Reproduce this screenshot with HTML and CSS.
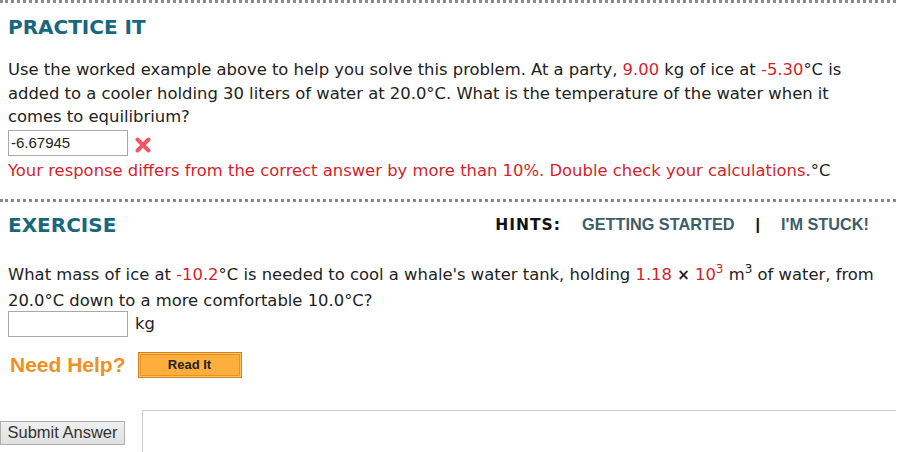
FILE: index.html
```html
<!DOCTYPE html>
<html>
<head>
<meta charset="utf-8">
<link rel="stylesheet" href="styles.css">
</head>
<body>
<div class="page">
  <section class="block">
    <h2 class="heading">PRACTICE IT</h2>
    <p class="text">Use the worked example above to help you solve this problem. At a party, <span class="red">9.00</span> kg of ice at <span class="red">-5.30</span>°C is<br>added to a cooler holding 30 liters of water at 20.0°C. What is the temperature of the water when it<br>comes to equilibrium?</p>
    <div class="answer-row">
      <input class="field" type="text" value="-6.67945">
      <svg class="wrong" width="16" height="16" viewBox="0 0 16 16"><path d="M2.5 2.5 L13.5 13.5 M13.5 2.5 L2.5 13.5" stroke="#ec5a62" stroke-width="4" stroke-linecap="round"/></svg>
    </div>
    <p class="error"><span class="red">Your response differs from the correct answer by more than 10%. Double check your calculations.</span>°C</p>
  </section>
  <section class="block">
    <div class="head-row">
      <h2 class="heading">EXERCISE</h2>
      <div class="hints">
        <span class="hints-label">HINTS:</span>
        <a class="hint-link">GETTING STARTED</a>
        <span class="sep">|</span>
        <a class="hint-link">I'M STUCK!</a>
      </div>
    </div>
    <p class="text q2">What mass of ice at <span class="red">-10.2</span>°C is needed to cool a whale's water tank, holding <span class="red">1.18</span> <b class="times">×</b> <span class="red">10<sup>3</sup></span> m<sup>3</sup> of water, from<br>20.0°C down to a more comfortable 10.0°C?</p>
    <div class="answer-row tight">
      <input class="field" type="text" value="">
      <span class="unit">kg</span>
    </div>
    <div class="help-row">
      <span class="need-help">Need Help?</span>
      <button class="read-it">Read It</button>
    </div>
  </section>
  <div class="bottom-row">
    <button class="submit">Submit Answer</button>
    <div class="panel"></div>
  </div>
</div>
</body>
</html>
```
FILE: styles.css
```css
html, body { margin: 0; padding: 0; background: #fff; }
body { font-family: "DejaVu Sans", Verdana, sans-serif; color: #222; }
.page { width: 896px; }
.block { border-top: 3px dotted #8a8a8a; padding: 0 8px 16px 8px; }
.heading { margin: 0; padding-top: 12px; font-size: 20px; font-weight: bold; color: #17687e; line-height: 24px; }
.text { margin: 19px 0 0 0; font-size: 16.4px; line-height: 23.5px; white-space: nowrap; }
.red { color: #d41f2c; }
.answer-row { display: flex; align-items: center; gap: 7px; margin-top: 1px; }
.answer-row.tight { margin-top: -2px; }
.field { box-sizing: border-box; width: 120px; height: 26px; margin: 0; border: 1px solid #a9a9a9; padding: 2px 2px; font-family: "Liberation Sans", Arial, sans-serif; font-size: 15px; color: #222; }
.wrong { margin-top: 5px; }
.error { margin: 3px 0 0 0; font-size: 16.4px; line-height: 24px; }
.head-row { display: flex; justify-content: space-between; align-items: center; padding-top: 11px; }
.head-row .heading { padding-top: 0; }
.hints { display: flex; align-items: baseline; gap: 21px; padding-right: 19px; }
.hints-label { font-family: "DejaVu Sans", Verdana, sans-serif; font-weight: bold; font-size: 15.5px; letter-spacing: 1px; color: #111; }
.hint-link { font-family: "Liberation Sans", Arial, sans-serif; font-weight: bold; font-size: 16.3px; color: #3d5d68; }
.sep { font-family: "Liberation Sans", Arial, sans-serif; font-weight: bold; font-size: 16px; color: #111; }
.q2 { margin-top: 25px; line-height: 25px; }
sup { font-size: 12px; line-height: 0; vertical-align: 7px; }
.times { font-size: 15px; color: #222; }
.unit { font-size: 16.4px; }
.help-row { display: flex; align-items: center; gap: 12px; margin-top: 15px; padding-left: 2px; }
.need-help { font-family: "Liberation Sans", Arial, sans-serif; font-weight: bold; font-size: 21px; color: #f0901e; }
.read-it { width: 104px; height: 26px; background: #fdae3c; border: 1px solid #d8801b; box-shadow: inset 0 0 0 1px #f8c36b, inset 0 0 0 2px #e8931f; font-family: "Liberation Sans", Arial, sans-serif; font-weight: bold; font-size: 13px; color: #222; padding: 0; }
.bottom-row { display: flex; align-items: flex-start; margin-top: 16px; }
.submit { box-sizing: border-box; width: 125px; margin-top: 11px; height: 24px; padding: 0; background: linear-gradient(#f0f0f0, #e0e0e0); border: 1px solid #adadad; font-family: "Liberation Sans", Arial, sans-serif; font-size: 16.5px; color: #333; }
.panel { margin-left: 17px; flex: 1; height: 60px; border-top: 1px solid #cfcfcf; border-left: 1px solid #cfcfcf; }
```
